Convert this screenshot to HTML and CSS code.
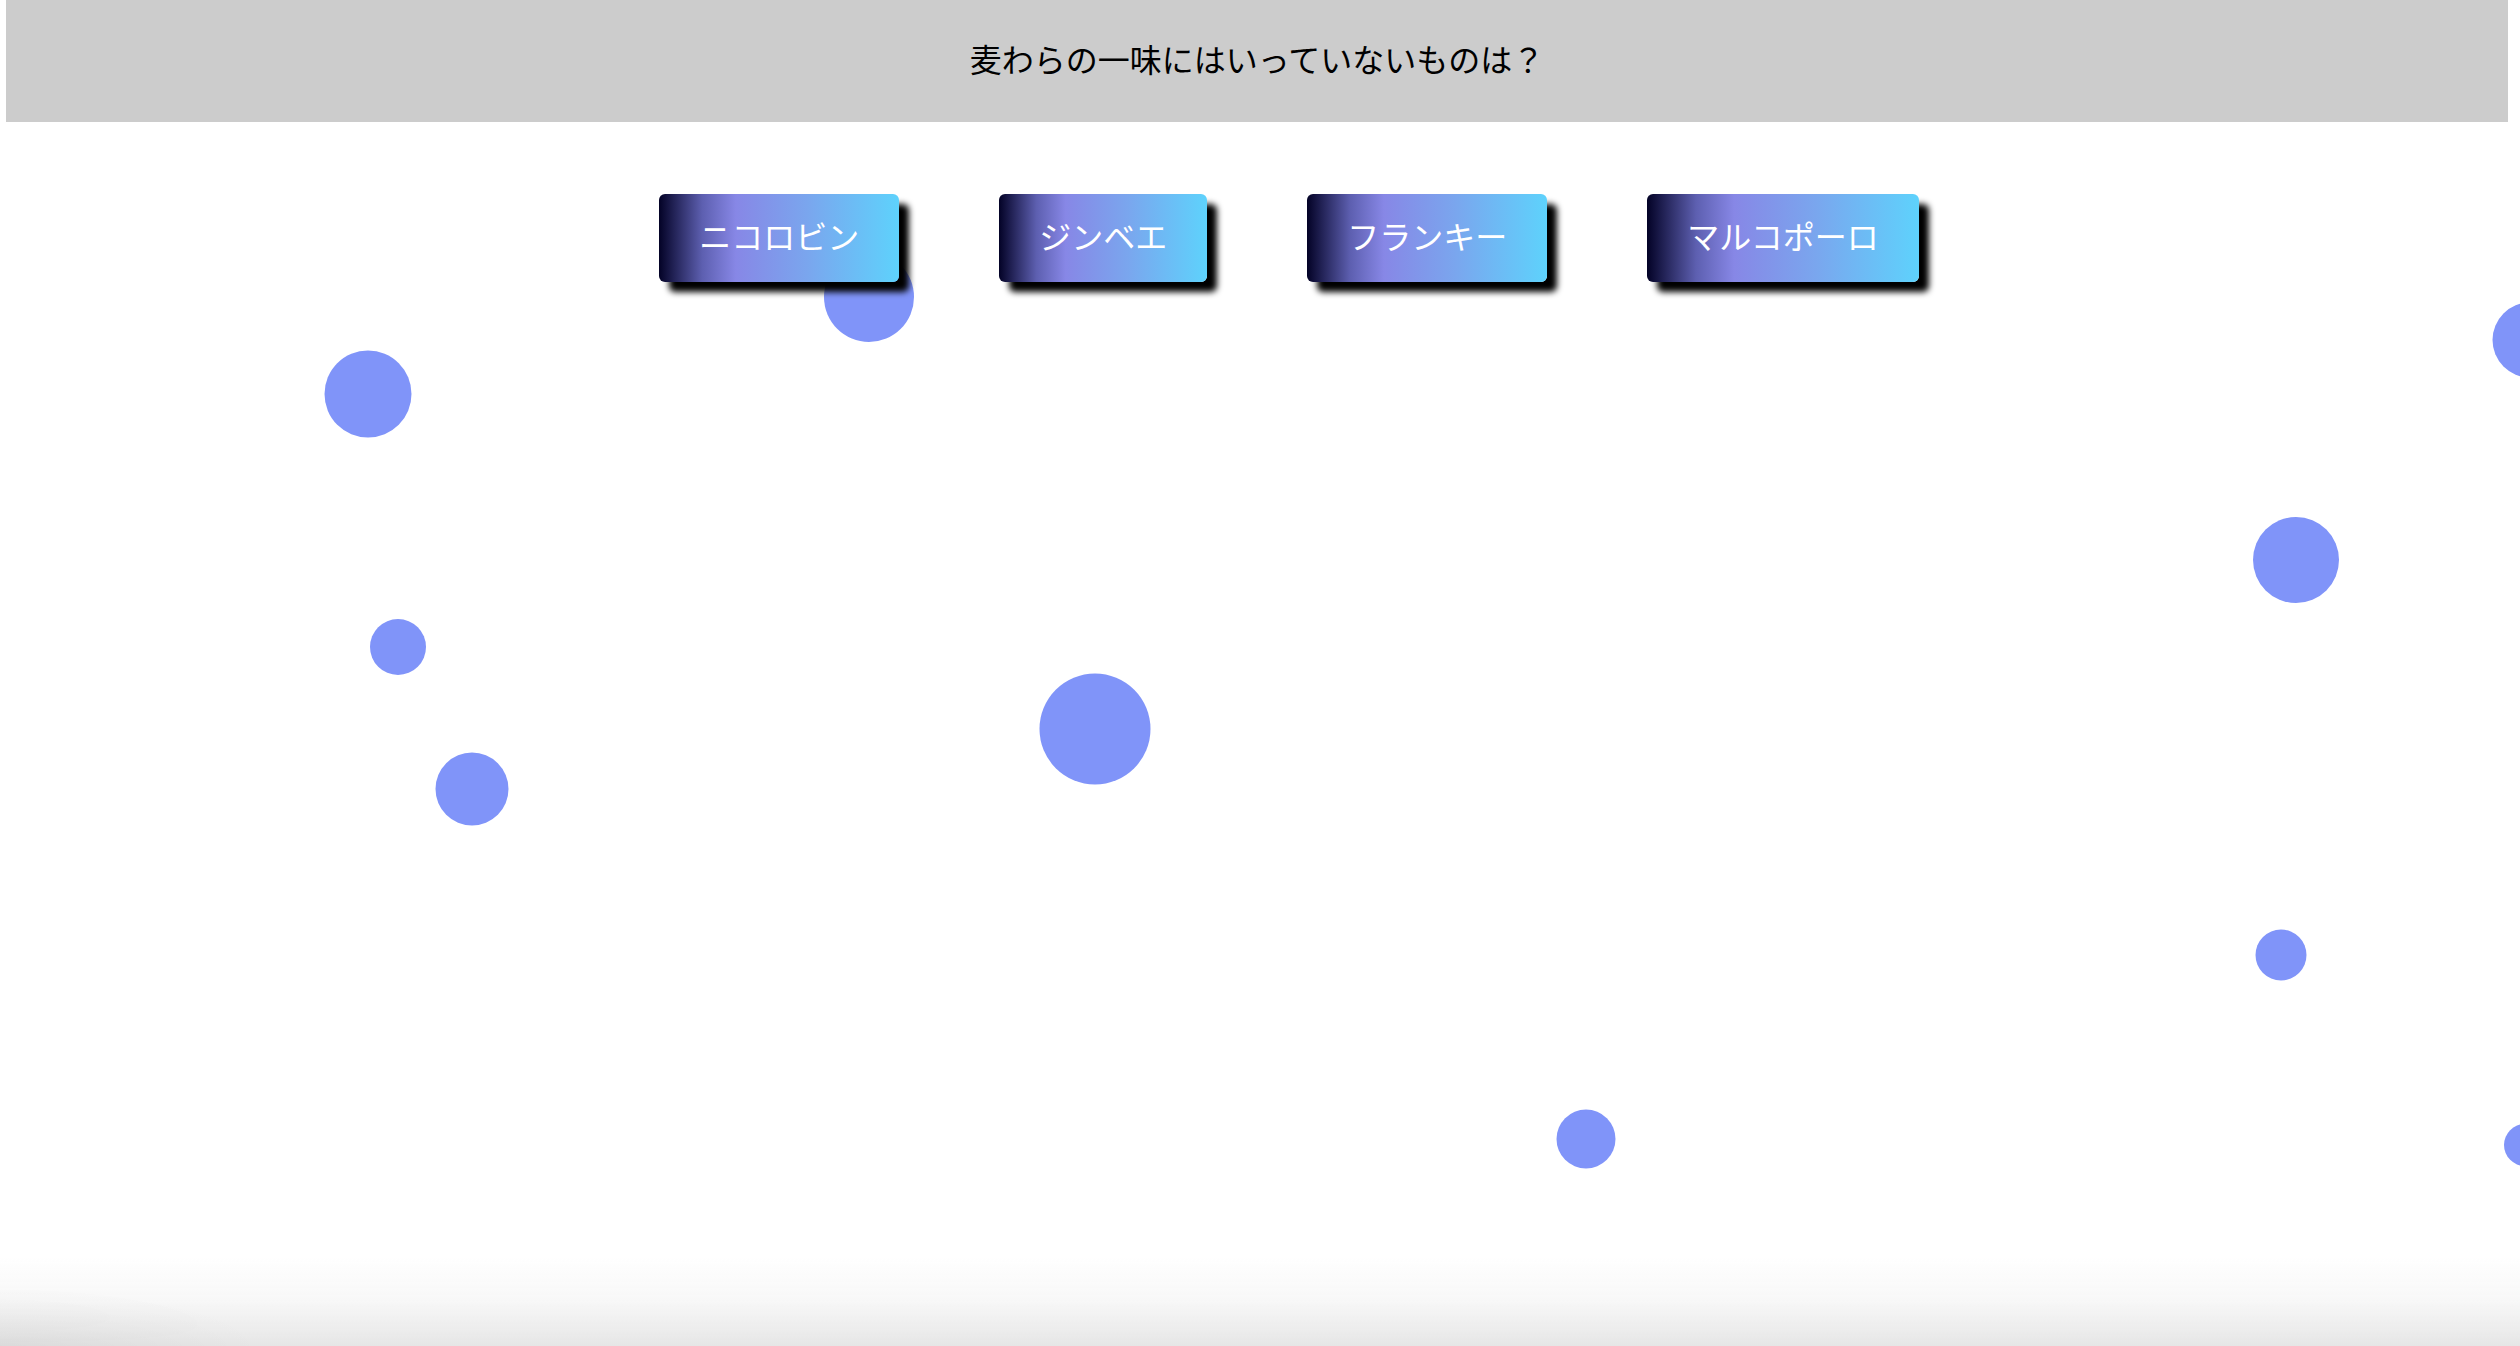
FILE: index.html
```html
<!DOCTYPE html>
<html lang="ja">
<head>
<meta charset="utf-8">
<title>クイズ</title>
<link rel="stylesheet" href="styles.css">
</head>
<body>
<div class="bubbles">
  <span class="bubble b1"></span>
  <span class="bubble b2"></span>
  <span class="bubble b3"></span>
  <span class="bubble b4"></span>
  <span class="bubble b5"></span>
  <span class="bubble b6"></span>
  <span class="bubble b7"></span>
  <span class="bubble b8"></span>
  <span class="bubble b9"></span>
  <span class="bubble b10"></span>
</div>
<header class="question">麦わらの一味にはいっていないものは？</header>
<main class="choices">
  <button class="choice">ニコロビン</button>
  <button class="choice">ジンベエ</button>
  <button class="choice">フランキー</button>
  <button class="choice">マルコポーロ</button>
</main>
<div class="bottom-fade"></div>
</body>
</html>
```

FILE: styles.css
```css
html, body {
  margin: 0;
  padding: 0;
  height: 100%;
  background: #ffffff;
  overflow: hidden;
}

body {
  font-family: "Noto Sans CJK JP", "Noto Sans", sans-serif;
  position: relative;
}

.question {
  position: relative;
  z-index: 1;
  margin: 0 12px 0 6px;
  height: 122px;
  background: #cccccc;
  color: #000000;
  font-size: 32px;
  display: flex;
  align-items: center;
  justify-content: center;
  padding-bottom: 7px;
  box-sizing: border-box;
}

.choices {
  position: relative;
  z-index: 1;
  display: flex;
  justify-content: center;
  gap: 100px;
  margin-top: 72px;
  padding-left: 58px;
}

.choice {
  font-family: "Noto Sans CJK JP", "Noto Sans", sans-serif;
  font-size: 32px;
  line-height: 48px;
  color: #ffffff;
  border: none;
  border-radius: 6px;
  padding: 17px 40px 23px;
  margin: 0;
  background: linear-gradient(90deg, #030226 0%, #5d5fb0 18%, #8787e6 32%, #7aa6ee 62%, #5ed2fc 100%);
  box-shadow: 10px 10px 6px #000000;
  cursor: pointer;
}

.bubbles {
  position: absolute;
  inset: 0;
  z-index: 0;
  pointer-events: none;
}

.bubble {
  position: absolute;
  border-radius: 50%;
  background: #8094f9;
  transform: translate(-50%, -50%);
}

.b1 { left: 869px; top: 297px; width: 90px; height: 90px; }
.b2 { left: 368px; top: 394px; width: 87px; height: 87px; }
.b3 { left: 2530px; top: 340px; width: 75px; height: 75px; }
.b4 { left: 2296px; top: 560px; width: 86px; height: 86px; }
.b5 { left: 398px; top: 647px; width: 56px; height: 56px; }
.b6 { left: 1095px; top: 729px; width: 111px; height: 111px; }
.b7 { left: 472px; top: 789px; width: 73px; height: 73px; }
.b8 { left: 2281px; top: 955px; width: 51px; height: 51px; }
.b9 { left: 1586px; top: 1139px; width: 59px; height: 59px; }
.b10 { left: 2525px; top: 1145px; width: 42px; height: 42px; }

.bottom-fade {
  position: fixed;
  left: 0;
  right: 0;
  bottom: 0;
  height: 90px;
  z-index: 2;
  pointer-events: none;
  background:
    radial-gradient(ellipse 260px 60px at 0% 100%, rgba(0,0,0,0.05), rgba(0,0,0,0) 100%),
    linear-gradient(180deg, rgba(230,230,230,0) 0%, rgba(240,240,240,0.5) 50%, rgba(230,230,230,1) 100%);
}
```
